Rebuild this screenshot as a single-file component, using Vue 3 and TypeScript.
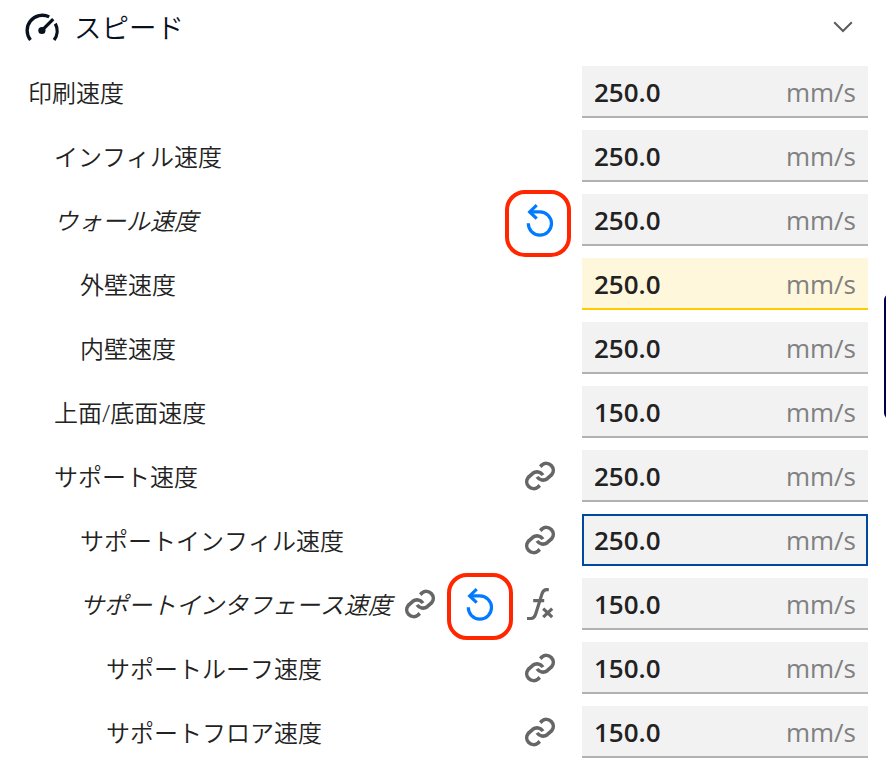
<script setup lang="ts">
type Icon = 'link' | 'reset' | 'fx'

interface Setting {
  label: string
  level: number
  value: string
  icons?: Icon[]
  changed?: boolean
  state?: 'warning' | 'focused'
}

const settings: Setting[] = [
  { label: '印刷速度', level: 0, value: '250.0' },
  { label: 'インフィル速度', level: 1, value: '250.0' },
  { label: 'ウォール速度', level: 1, value: '250.0', icons: ['reset'], changed: true },
  { label: '外壁速度', level: 2, value: '250.0', state: 'warning' },
  { label: '内壁速度', level: 2, value: '250.0' },
  { label: '上面/底面速度', level: 1, value: '150.0' },
  { label: 'サポート速度', level: 1, value: '250.0', icons: ['link'] },
  { label: 'サポートインフィル速度', level: 2, value: '250.0', icons: ['link'], state: 'focused' },
  { label: 'サポートインタフェース速度', level: 2, value: '150.0', icons: ['link', 'reset', 'fx'], changed: true },
  { label: 'サポートルーフ速度', level: 3, value: '150.0', icons: ['link'] },
  { label: 'サポートフロア速度', level: 3, value: '150.0', icons: ['link'] },
]
</script>

<template>
  <main class="panel">
    <header class="head">
      <svg class="gauge" viewBox="0 0 36 32" width="36" height="32">
        <path d="M6.5 28A15.2 15.2 0 0 1 25.2 4.9M31.3 11.6A15.2 15.2 0 0 1 30.1 28" fill="none" stroke="#08121f" stroke-width="3.3" />
        <path d="M18 18.4L29.2 7.2" stroke="#08121f" stroke-width="3.3" />
        <circle cx="17.9" cy="18.5" r="3.6" fill="#08121f" />
      </svg>
      <h1 class="title">スピード</h1>
      <svg class="chevron" viewBox="0 0 20 12" width="20" height="12">
        <path d="M1.2 1.2L10 10L18.8 1.2" fill="none" stroke="#5c5c5c" stroke-width="2" />
      </svg>
    </header>
    <ul class="rows">
      <li v-for="s in settings" :key="s.label" class="row">
        <span class="label" :class="['level-' + s.level, { changed: s.changed }]">{{ s.label }}</span>
        <span class="icons">
          <span v-for="icon in s.icons" :key="icon" class="icon">
            <svg v-if="icon === 'link'" viewBox="0 0 32 32" width="32" height="32">
              <g fill="none" stroke="#666" stroke-width="3.6">
                <path d="M16.2 6.6L18.1 4.9A6.9 6.9 0 0 1 27.7 14.7L23.2 18.7A7 7 0 0 1 13.1 16.9" />
                <path d="M15.8 25.4L13.9 27.1A6.9 6.9 0 0 1 4.3 17.3L8.8 13.3A7 7 0 0 1 18.9 15.1" />
              </g>
            </svg>
            <svg v-else-if="icon === 'reset'" class="reset" viewBox="0 0 32 34" width="32" height="34">
              <g fill="none" stroke="#007bff" stroke-width="3.2">
                <path d="M4.3 20.3A11.6 11.6 0 1 0 15.9 8.9H6" />
                <path d="M12.7 2.2L5.7 8.9L12.7 15.6" />
              </g>
            </svg>
            <svg v-else viewBox="0 0 32 36" width="32" height="36">
              <g fill="none" stroke="#666" stroke-width="3.2">
                <path d="M24.8 3.7H22.6Q19.4 3.7 18.1 7.6L11.6 28.2Q10.2 32.5 7 32.5H3" />
                <path d="M9.2 14.6H20.2M19.2 22.6L28.2 31.2M28.2 22.6L19.2 31.2" />
              </g>
            </svg>
            <span v-if="icon === 'reset'" class="ring" :class="{ shifted: s.icons?.length === 1 }"></span>
          </span>
        </span>
        <span class="field" :class="s.state">
          <span class="value">{{ s.value }}</span>
          <span class="unit">mm/s</span>
        </span>
      </li>
    </ul>
    <span class="edge"></span>
  </main>
</template>

<style>
body {
  background: #fff;
}
</style>

<style scoped>
.panel {
  position: relative;
  box-sizing: border-box;
  width: 886px;
  height: 768px;
  overflow: hidden;
  background: #fff;
  font-family: "Open Sans", "Noto Sans CJK JP", sans-serif;
}
.head {
  display: flex;
  align-items: center;
  height: 60px;
  padding: 0 33px 0 24px;
  box-sizing: border-box;
}
.gauge {
  margin-bottom: 4px;
}
.title {
  margin: 0 auto 5px 14px;
  font-size: 27.5px;
  line-height: 40px;
  font-weight: 350;
  font-kerning: none;
  color: #08121f;
}
.chevron {
  margin-bottom: 6px;
}
.rows {
  margin: 0;
  padding: 0 18px 0 28px;
  list-style: none;
}
.row {
  display: flex;
  align-items: center;
  height: 64px;
}
.label {
  padding-top: 1px;
  font-size: 24px;
  line-height: 36px;
  font-weight: 350;
  font-kerning: none;
  color: #222;
  white-space: nowrap;
}
.level-1 {
  padding-left: 26px;
}
.level-2 {
  padding-left: 52px;
}
.level-3 {
  padding-left: 78px;
}
.changed {
  font-style: italic;
}
.icons {
  display: flex;
  gap: 28px;
  margin-left: auto;
  margin-right: 26px;
}
.icon {
  position: relative;
  display: flex;
  align-items: center;
  justify-content: center;
  width: 32px;
  height: 36px;
}
.ring {
  position: absolute;
  left: -17px;
  top: -13px;
  width: 66px;
  height: 67px;
  box-sizing: border-box;
  border: 4px solid #ff2600;
  border-radius: 20px;
}
.ring.shifted {
  left: -19px;
  top: -12px;
}
.field {
  display: flex;
  align-items: center;
  justify-content: space-between;
  flex: none;
  box-sizing: border-box;
  width: 286px;
  height: 52px;
  padding: 2px 12px 0;
  border-bottom: 2px solid #b2b2b2;
  background: #f2f2f2;
  font-size: 26px;
  line-height: 36px;
}
.warning {
  border-color: #ffcc00;
  background: #fff7dc;
}
.focused {
  padding: 0 10px;
  border: 2px solid #0048a0;
}
.value {
  font-weight: 600;
  color: #222;
}
.unit {
  color: #808080;
}
.edge {
  position: absolute;
  left: 884px;
  top: 294px;
  width: 20px;
  height: 125px;
  border-radius: 6px;
  background: #00004d;
}
</style>
